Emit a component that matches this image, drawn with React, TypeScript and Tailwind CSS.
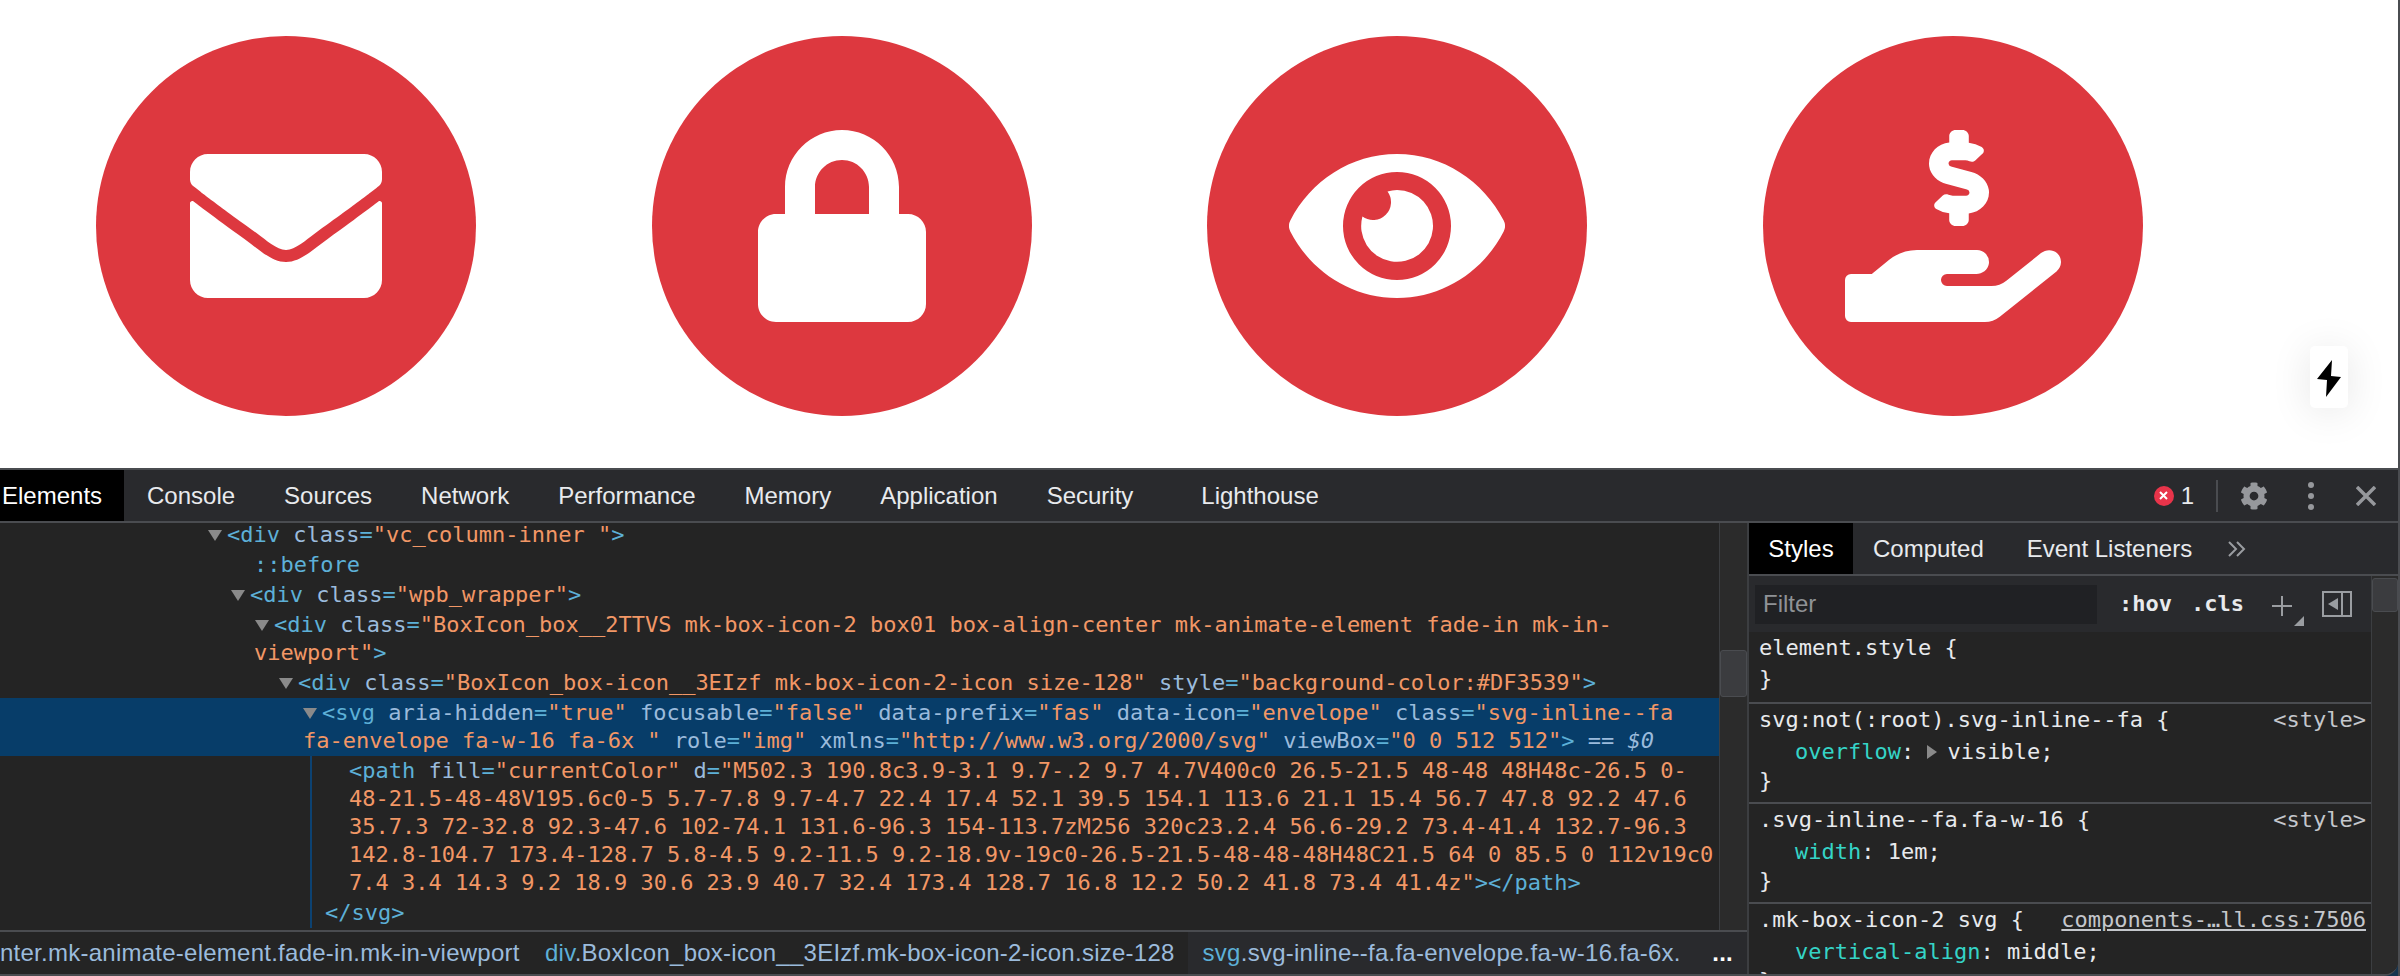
import React from 'react'
import { FaEnvelope, FaLock, FaEye, FaHandHoldingUsd, FaCog } from 'react-icons/fa'

const mono = "font-['DejaVu_Sans_Mono',monospace] text-[22px] leading-[28px] whitespace-pre"

const Tag = ({ children }: { children: React.ReactNode }) => <span className="text-[#5db0d7]">{children}</span>
const Name = ({ children }: { children: React.ReactNode }) => <span className="text-[#9bbbdc]">{children}</span>
const Val = ({ children }: { children: React.ReactNode }) => <span className="text-[#f29766]">{children}</span>

const Attr = ({ name, value }: { name: string; value: string }) => (
  <>
    {' '}
    <Name>{name}</Name>
    <Tag>=</Tag>
    <Val>{value}</Val>
  </>
)

const Arrow = () => (
  <svg width="14" height="12" viewBox="0 0 14 12" className="mr-[5px] shrink-0">
    <polygon points="0,1 14,1 7,12" fill="#8a8a8a" />
  </svg>
)

function Node({ indent, arrow, children }: { indent: string; arrow?: boolean; children: React.ReactNode }) {
  return (
    <div className={`flex items-center h-[28px] mt-[2px] ${indent} ${mono}`}>
      {arrow && <Arrow />}
      <span>{children}</span>
    </div>
  )
}

function Rule({ selector, source, link, children }: { selector: string; source?: string; link?: boolean; children?: React.ReactNode }) {
  return (
    <div className={`border-t-2 border-[#4a4c50] pl-[10px] pr-[5px] pb-[8px] ${mono}`}>
      <div className="flex items-center justify-between h-[32px] text-[#e8eaed]">
        <span>{selector}</span>
        <span className={link ? 'underline text-[#c4c7cc]' : 'text-[#c4c7cc]'}>{source}</span>
      </div>
      {children}
    </div>
  )
}

const Prop = ({ name, children }: { name: string; children: React.ReactNode }) => (
  <div className="flex items-center h-[32px] pl-[36px] text-[#e8eaed]">
    <span className="text-[#35d4c7]">{name}</span>
    <span>: </span>
    {children}
  </div>
)

const Brace = () => <div className="flex items-center h-[26px] text-[#e8eaed]">{'}'}</div>

function Circle({ children }: { children: React.ReactNode }) {
  return <div className="w-[380px] h-[380px] rounded-full bg-[#dd383f] text-white flex items-center justify-center shrink-0">{children}</div>
}

export default function App() {
  return (
    <div className="relative w-[2400px] h-[976px] overflow-hidden bg-[#17354f] border-r-2 border-[#4a4c50] font-['Liberation_Sans',sans-serif]">
      <div className="h-[468px] bg-white pt-[36px] pl-[96px] flex gap-[175.5px]">
        <Circle><FaEnvelope className="w-[192px] h-[192px]" /></Circle>
        <Circle><FaLock className="w-[168px] h-[192px]" /></Circle>
        <Circle><FaEye className="w-[216px] h-[192px]" /></Circle>
        <Circle><FaHandHoldingUsd className="w-[216px] h-[192px]" /></Circle>
      </div>

      <div className="absolute left-[2310px] top-[346px] w-[38px] h-[62px] bg-white rounded-[5px] shadow-[0_4px_40px_rgba(0,0,0,0.1)]">
        <svg width="38" height="62" viewBox="0 0 38 62">
          <polygon points="22,14 7,33 17,34 16,51 31,31 21,30" fill="#000" />
        </svg>
      </div>

      <div className="h-[508px] bg-[#242424] border-t-2 border-b-2 border-[#4a4c50] rounded-br-[14px] overflow-hidden flex flex-col">
        <div className="h-[53px] shrink-0 bg-[#292a2d] border-b-2 border-[#4a4c50] flex items-stretch text-[24px] text-[#e8eaed]">
          <div className="w-[124px] bg-black text-white flex items-center pl-[2px]">Elements</div>
          <div className="flex items-center pl-[23px] gap-[49px]">
            <span>Console</span>
            <span>Sources</span>
            <span>Network</span>
            <span>Performance</span>
            <span>Memory</span>
            <span>Application</span>
            <span>Security</span>
            <span className="ml-[19px]">Lighthouse</span>
          </div>
          <div className="ml-auto flex items-center pr-[22px]">
            <span className="w-[20px] h-[20px] rounded-full bg-[#e8344a] flex items-center justify-center">
              <svg width="9" height="9" viewBox="0 0 9 9"><path d="M1 1l7 7M8 1l-7 7" stroke="#fff" strokeWidth="2" /></svg>
            </span>
            <span className="ml-[7px]">1</span>
            <span className="w-[2px] h-[32px] bg-[#4a4c50] ml-[22px]" />
            <FaCog size={28} className="ml-[22px] text-[#96989c]" />
            <svg width="8" height="30" viewBox="0 0 8 30" className="ml-[39px]">
              <circle cx="4" cy="4" r="3" fill="#96989c" /><circle cx="4" cy="15" r="3" fill="#96989c" /><circle cx="4" cy="26" r="3" fill="#96989c" />
            </svg>
            <svg width="20" height="20" viewBox="0 0 20 20" className="ml-[41px]"><path d="M1 1l18 18M19 1L1 19" stroke="#96989c" strokeWidth="3.5" /></svg>
          </div>
        </div>

        <div className="flex flex-1 min-h-0">
          <div className="w-[1749px] shrink-0 flex flex-col border-r-2 border-[#3c3e41]">
            <div className="flex flex-1 min-h-0">
              <div className="flex-1 min-w-0 overflow-hidden text-[#e8eaed]">
                <div className="-mt-[4px]">
                  <Node indent="pl-[208px]" arrow><Tag>&lt;div</Tag><Attr name="class" value={'"vc_column-inner "'} /><Tag>&gt;</Tag></Node>
                  <Node indent="pl-[254px]"><Tag>::before</Tag></Node>
                  <Node indent="pl-[231px]" arrow><Tag>&lt;div</Tag><Attr name="class" value={'"wpb_wrapper"'} /><Tag>&gt;</Tag></Node>
                  <Node indent="pl-[255px]" arrow><Tag>&lt;div</Tag><Attr name="class" value={'"BoxIcon_box__2TTVS mk-box-icon-2 box01 box-align-center mk-animate-element fade-in mk-in-'} /></Node>
                  <div className={`h-[28px] pl-[254px] ${mono}`}><Val>viewport"</Val><Tag>&gt;</Tag></div>
                  <Node indent="pl-[279px]" arrow><Tag>&lt;div</Tag><Attr name="class" value={'"BoxIcon_box-icon__3EIzf mk-box-icon-2-icon size-128"'} /><Attr name="style" value={'"background-color:#DF3539"'} /><Tag>&gt;</Tag></Node>
                </div>
                <div className="bg-[#073d69] mt-[1px] h-[58px]">
                  <div className={`flex items-center h-[29px] pl-[303px] ${mono}`}>
                    <Arrow />
                    <span><Tag>&lt;svg</Tag><Attr name="aria-hidden" value={'"true"'} /><Attr name="focusable" value={'"false"'} /><Attr name="data-prefix" value={'"fas"'} /><Attr name="data-icon" value={'"envelope"'} /><Attr name="class" value={'"svg-inline--fa'} /></span>
                  </div>
                  <div className={`h-[29px] pl-[303px] ${mono}`}>
                    <Val>fa-envelope fa-w-16 fa-6x "</Val><Attr name="role" value={'"img"'} /><Attr name="xmlns" value={'"http://www.w3.org/2000/svg"'} /><Attr name="viewBox" value={'"0 0 512 512"'} /><Tag>&gt;</Tag><span className="text-[#9bbbdc]"> == <i>$0</i></span>
                  </div>
                </div>
                <div className="ml-[310px] border-l-2 border-[#0c4272] pl-[37px] pt-[1px] h-[172px]">
                  <div className={mono}><Tag>&lt;path</Tag><Attr name="fill" value={'"currentColor"'} /> <Name>d</Name><Tag>=</Tag><Val>{'"M502.3 190.8c3.9-3.1 9.7-.2 9.7 4.7V400c0 26.5-21.5 48-48 48H48c-26.5 0-'}</Val></div>
                  <div className={mono}><Val>48-21.5-48-48V195.6c0-5 5.7-7.8 9.7-4.7 22.4 17.4 52.1 39.5 154.1 113.6 21.1 15.4 56.7 47.8 92.2 47.6</Val></div>
                  <div className={mono}><Val>35.7.3 72-32.8 92.3-47.6 102-74.1 131.6-96.3 154-113.7zM256 320c23.2.4 56.6-29.2 73.4-41.4 132.7-96.3</Val></div>
                  <div className={mono}><Val>142.8-104.7 173.4-128.7 5.8-4.5 9.2-11.5 9.2-18.9v-19c0-26.5-21.5-48-48-48H48C21.5 64 0 85.5 0 112v19c0</Val></div>
                  <div className={mono}><Val>7.4 3.4 14.3 9.2 18.9 30.6 23.9 40.7 32.4 173.4 128.7 16.8 12.2 50.2 41.8 73.4 41.4z"</Val><Tag>&gt;&lt;/path&gt;</Tag></div>
                  <div className={`-ml-[24px] mt-[2px] ${mono}`}><Tag>&lt;/svg&gt;</Tag></div>
                </div>
              </div>
              <div className="w-[28px] shrink-0 bg-[#2b2b2b] border-l border-[#3c3e41] flex flex-col pt-[127px]">
                <div className="h-[47px] bg-[#3b3c3f] rounded-[3px] border border-[#4a4c50]" />
              </div>
            </div>
            <div className="h-[44px] shrink-0 border-t-2 border-[#4a4c50] flex items-center text-[24px] tracking-[0.25px] whitespace-pre overflow-hidden">
              <span className="text-[#9bbbdc] w-[545px] shrink-0">nter.mk-animate-element.fade-in.mk-in-viewport</span>
              <span className="shrink-0"><Tag>div</Tag><Name>.BoxIcon_box-icon__3EIzf.mk-box-icon-2-icon.size-128</Name></span>
              <span className="ml-[13px] h-full flex-1 flex items-center pl-[15px] bg-[#292a2d]"><Tag>svg</Tag><Name>.svg-inline--fa.fa-envelope.fa-w-16.fa-6x.</Name><span className="ml-auto pr-[14px] text-white font-bold">...</span></span>
            </div>
          </div>

          <div className="flex-1 min-w-0 flex flex-col">
            <div className="h-[53px] shrink-0 bg-[#292a2d] border-b-2 border-[#4a4c50] flex items-stretch text-[24px] text-[#e8eaed]">
              <div className="w-[104px] bg-black text-white flex items-center justify-center">Styles</div>
              <div className="flex items-center pl-[20px]">
                <span>Computed</span>
                <span className="ml-[43px]">Event Listeners</span>
                <svg width="18" height="16" viewBox="0 0 18 16" className="ml-[36px]">
                  <path d="M1 1l7 7-7 7M9 1l7 7-7 7" stroke="#9a9da1" strokeWidth="2" fill="none" />
                </svg>
              </div>
            </div>
            <div className="flex flex-1 min-h-0">
              <div className="flex-1 min-w-0 overflow-hidden">
                <div className="h-[56px] bg-[#292a2d] flex items-center pl-[6px]">
                  <div className="w-[342px] h-[39px] bg-[#202124] pl-[8px] flex items-center text-[24px] text-[#8f9296]">Filter</div>
                  <span className={`ml-[22px] font-bold text-[#e8eaed] ${mono}`}>:hov</span>
                  <span className={`ml-[19px] font-bold text-[#e8eaed] ${mono}`}>.cls</span>
                  <svg width="32" height="34" viewBox="0 0 32 34" className="ml-[28px] mt-[14px]">
                    <path d="M10 2v20M0 12h20" stroke="#9a9da1" strokeWidth="2" fill="none" />
                    <polygon points="32,22 32,32 22,32" fill="#9a9da1" />
                  </svg>
                  <svg width="30" height="26" viewBox="0 0 30 26" className="ml-[18px]">
                    <rect x="1" y="1" width="28" height="24" fill="none" stroke="#9a9da1" strokeWidth="2" />
                    <path d="M20 1v24" stroke="#9a9da1" strokeWidth="2" />
                    <polygon points="16,7 16,19 6,13" fill="#9a9da1" />
                  </svg>
                </div>
                <div className={`pl-[10px] pb-[8px] ${mono}`}>
                  <div className="flex items-center h-[32px] text-[#e8eaed]">element.style {'{'}</div>
                  <div className="flex items-center h-[30px] text-[#e8eaed]">{'}'}</div>
                </div>
                <Rule selector="svg:not(:root).svg-inline--fa {" source="<style>">
                  <Prop name="overflow">
                    <svg width="10" height="14" viewBox="0 0 10 14" className="mr-[10px]"><polygon points="0,0 10,7 0,14" fill="#8a8a8a" /></svg>
                    <span>visible;</span>
                  </Prop>
                  <Brace />
                </Rule>
                <Rule selector=".svg-inline--fa.fa-w-16 {" source="<style>">
                  <Prop name="width"><span>1em;</span></Prop>
                  <Brace />
                </Rule>
                <Rule selector=".mk-box-icon-2 svg {" source="components-…ll.css:7506" link>
                  <Prop name="vertical-align"><span>middle;</span></Prop>
                  <Brace />
                </Rule>
              </div>
              <div className="w-[27px] shrink-0 border-l border-[#3c3e41] bg-[#2b2b2b]">
                <div className="h-[34px] mt-[2px] bg-[#3b3c3f] rounded-[3px] border border-[#4a4c50]" />
              </div>
            </div>
          </div>
        </div>
      </div>
    </div>
  )
}
